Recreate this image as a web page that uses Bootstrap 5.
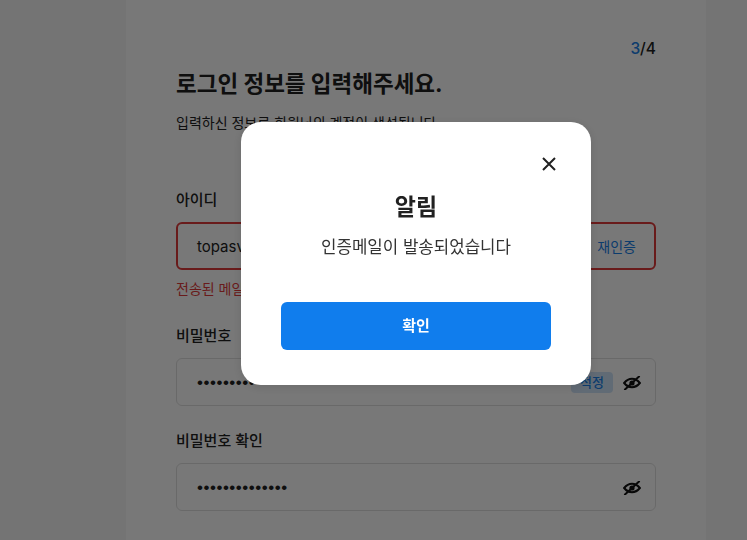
<!DOCTYPE html>
<html lang="ko">
<head>
<meta charset="utf-8">
<title>회원가입</title>
<link href="https://cdn.jsdelivr.net/npm/bootstrap@5.3.0/dist/css/bootstrap.min.css" rel="stylesheet">
<style>
html, body { height: 540px; overflow: hidden; }
body { background: #f7f7f7; font-family: Inter, "Noto Sans CJK KR", sans-serif; color: #212121; }
.sheet { width: 580px; height: 540px; margin-left: 126px; background: #fff; padding: 39px 50px 0; }
.step { font-size: 15.5px; line-height: 20px; font-weight: 500; }
.step b { font-weight: 500; color: #1a7fe8; }
.headline { font-size: 22.5px; line-height: 30px; font-weight: 700; margin: 10px 0 0; }
.subline { font-size: 14px; line-height: 20px; margin: 14px 0 0; }
.first-group { margin-top: 56px; }
.lab { font-size: 15px; line-height: 22px; font-weight: 500; margin: 0 0 11px; display: block; }
.field { height: 48px; border: 1px solid #e0e0e0; border-radius: 6px; padding: 0 14px 0 20px; font-size: 15px; }
.field.bad { border: 2px solid #e03a3a; padding: 0 18px 0 19px; }
.idtext { padding-top: 2px; }
.again { color: #1a7fe8; font-size: 14px; }
.err { color: #e03a3a; font-size: 14px; line-height: 20px; margin-top: 9px; }
.pw-group { margin-top: 26px; }
.pw-group.next { margin-top: 24px; }
.dots { font-family: "Liberation Sans", sans-serif; letter-spacing: .52px; font-size: 17px; border: 0; padding: 2px 0 0; background: none; color: #212121; min-width: 0; outline: 0; }
.tag { background: #cfe3f8; color: #1a7fe8; font-size: 13px; font-weight: 500; line-height: 21px; border-radius: 4px; margin-right: 10px; width: 42px; text-align: center; white-space: nowrap; }
.eye { width: 18px; height: 14px; display: block; margin-top: 1px; }
.veil { position: fixed; inset: 0; background: rgba(0,0,0,.53); padding: 122px 0 0 241px; }
.dialog { width: 350px; height: 263px; background: #fff; border-radius: 20px; padding: 28px 40px 35px; box-shadow: 0 2px 12px rgba(0,0,0,.12); }
.closer { width: 24px; height: 24px; background: none; border: 0; padding: 0; margin-right: -10px; display: block; margin-left: auto; }
.dtitle { font-size: 23px; line-height: 32px; font-weight: 700; margin: 17px 0 0; }
.dtext { font-size: 16.8px; line-height: 24px; margin: 12px 0 43px; color: #333; }
.okbtn { background: #107ded; color: #fff; font-size: 15px; font-weight: 700; height: 48px; border: 0; border-radius: 6px; }
</style>
</head>
<body>
<main class="sheet">
  <div class="step text-end"><b>3</b>/4</div>
  <h1 class="headline">로그인 정보를 입력해주세요.</h1>
  <p class="subline">입력하신 정보로 회원님의 계정이 생성됩니다.</p>

  <div class="first-group">
    <label class="lab">아이디</label>
    <div class="field bad d-flex align-items-center justify-content-between">
      <span class="idtext">topasvga@naver.com</span><span class="again">재인증</span>
    </div>
    <div class="err">전송된 메일을 확인해주세요.</div>
  </div>

  <div class="pw-group">
    <label class="lab">비밀번호</label>
    <div class="field d-flex align-items-center">
      <input class="dots flex-grow-1" type="password" value="abcdefghijklmn" readonly>
      <span class="tag">적정</span>
      <svg class="eye" viewBox="0 0 18 14" fill="none" stroke="#111" stroke-width="2.100"><path d="M1.200 7c2.200-2.800 4.700-4.200 7.800-4.200S14.600 4.200 16.800 7c-2.200 2.800-4.700 4.200-7.800 4.200S3.400 9.800 1.200 7Z"/><circle cx="9" cy="7" r="2.600" fill="#111" stroke="none"/><path d="M2 13.400 16 .6" stroke-linecap="round"/></svg>
    </div>
  </div>

  <div class="pw-group next">
    <label class="lab">비밀번호 확인</label>
    <div class="field d-flex align-items-center">
      <input class="dots flex-grow-1" type="password" value="abcdefghijklmn" readonly>
      <svg class="eye" viewBox="0 0 18 14" fill="none" stroke="#111" stroke-width="2.100"><path d="M1.200 7c2.200-2.800 4.700-4.200 7.800-4.200S14.600 4.200 16.800 7c-2.200 2.800-4.700 4.200-7.800 4.200S3.400 9.800 1.200 7Z"/><circle cx="9" cy="7" r="2.600" fill="#111" stroke="none"/><path d="M2 13.400 16 .6" stroke-linecap="round"/></svg>
    </div>
  </div>
</main>

<div class="veil">
  <div class="dialog text-center">
    <button class="closer" type="button" aria-label="닫기"><svg width="24" height="24" viewBox="0 0 24 24" fill="none" stroke="#212121" stroke-width="2"><path d="M6 6l12 12M18 6 6 18"/></svg></button>
    <h2 class="dtitle">알림</h2>
    <p class="dtext">인증메일이 발송되었습니다</p>
    <button class="btn okbtn w-100" type="button">확인</button>
  </div>
</div>
<script src="https://cdn.jsdelivr.net/npm/bootstrap@5.3.0/dist/js/bootstrap.bundle.min.js"></script>
</body>
</html>
